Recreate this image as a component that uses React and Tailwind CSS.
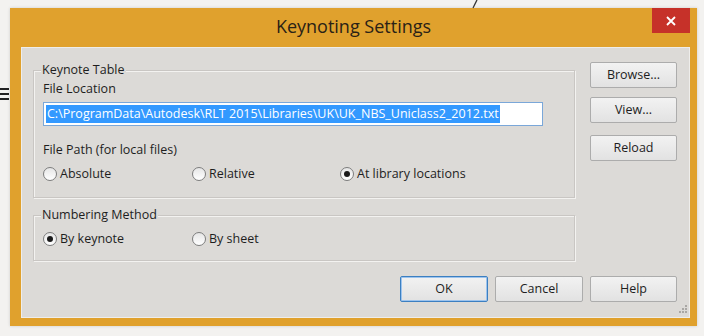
import React from "react";

const font = { fontFamily: '"Open Sans", "Noto Sans", sans-serif' };

const Radio = ({ label, checked }) => (
  <div className="flex items-center">
    <span className="w-[14px] h-[14px] rounded-full border border-[#7d7d7d] bg-gradient-to-b from-[#e6e6e6] to-white flex items-center justify-center">
      {checked && <span className="w-[6px] h-[6px] rounded-full bg-[#1a1a1a]" />}
    </span>
    <span className="ml-[3px] text-[12.5px] text-[#1e1e1e]">{label}</span>
  </div>
);

const Button = ({ label, def, className = "" }) => (
  <button
    className={`h-[26px] text-[12.5px] text-[#1e1e1e] rounded-[2px] border bg-gradient-to-b from-[#f2f2f2] to-[#e2e2e2] ${
      def ? "border-[#3c7fc1] shadow-[inset_0_0_0_1px_#9dc4ee]" : "border-[#acacac]"
    } ${className}`}
  >
    {label}
  </button>
);

const GroupBox = ({ title, className = "", children }) => (
  <div className={`relative border border-[#c9c6c3] shadow-[inset_1px_1px_0_#f3f2f0,1px_1px_0_#f3f2f0] ${className}`}>
    <span className="absolute -top-[9px] left-[7px] px-[1px] bg-[#dcdad7] text-[12.5px] leading-[16px] text-[#1e1e1e]">
      {title}
    </span>
    {children}
  </div>
);

export default function App() {
  return (
    <div className="relative w-[704px] h-[336px] bg-[#f3f2f0] overflow-hidden" style={font}>
      {/* stray marks from the window behind */}
      <svg className="absolute left-[468px] top-0" width="12" height="10">
        <path d="M9 0 L5 8" stroke="#333" strokeWidth="1.3" fill="none" />
      </svg>
      <div className="absolute left-0 top-[88px] w-[9px] flex flex-col gap-[3px]">
        <span className="h-[2px] bg-[#222]" />
        <span className="h-[2px] bg-[#222]" />
        <span className="h-[2px] bg-[#222]" />
      </div>

      <div className="ml-[10px] mt-[8px] w-[687px] h-[318px] bg-[#e0a12d] flex flex-col shadow-[0_0_3px_rgba(0,0,0,0.15)]">
        {/* title bar */}
        <div className="relative h-[39px] flex items-center justify-center">
          <span className="text-[18px] text-[#2a2216] -mt-[2px]">Keynoting Settings</span>
          <div className="absolute right-[7px] top-0 w-[38px] h-[25px] bg-[#c63129] flex items-center justify-center">
            <svg width="10" height="10" viewBox="0 0 10 10">
              <path d="M1 1 L9 9 M9 1 L1 9" stroke="#fff" strokeWidth="1.8" />
            </svg>
          </div>
        </div>

        {/* content */}
        <div className="relative ml-[11px] mr-[7px] mb-[8px] flex-1 bg-[#dcdad7] border border-[#eeedeb] pl-[11px] pt-[14px] text-[#1e1e1e]">
          <div className="flex items-start">
            <div className="w-[542px] pt-[8px]">
              <GroupBox title="Keynote Table" className="h-[128px] pl-[9px] pt-[10px]">
                <div className="text-[12.5px] leading-[16px]">File Location</div>
                <div className="mt-[5px] w-[500px] h-[24px] bg-white border border-[#7aa7d9] flex items-center pl-[2px]">
                  <span className="bg-[#3399ff] text-white text-[12.5px] leading-[18px] px-[1px] whitespace-nowrap">
                    C:\ProgramData\Autodesk\RLT 2015\Libraries\UK\UK_NBS_Uniclass2_2012.txt
                  </span>
                </div>
                <div className="mt-[16px] text-[12.5px] leading-[16px]">File Path (for local files)</div>
                <div className="mt-[7px] grid grid-cols-[149px_148px_1fr]">
                  <Radio label="Absolute" />
                  <Radio label="Relative" />
                  <Radio label="At library locations" checked />
                </div>
              </GroupBox>

              <GroupBox title="Numbering Method" className="mt-[17px] h-[46px] pl-[9px] pt-[14px]">
                <div className="grid grid-cols-[149px_148px_1fr]">
                  <Radio label="By keynote" checked />
                  <Radio label="By sheet" />
                </div>
              </GroupBox>
            </div>

            <div className="ml-[15px] w-[87px] flex flex-col">
              <Button label="Browse..." />
              <Button label="View..." className="mt-[9px]" />
              <Button label="Reload" className="mt-[12px]" />
            </div>
          </div>

          <div className="mt-[15px] mr-[12px] flex justify-end gap-[7px]">
            <Button label="OK" def className="w-[88px]" />
            <Button label="Cancel" className="w-[88px]" />
            <Button label="Help" className="w-[87px]" />
          </div>

          {/* resize grip */}
          <svg className="absolute right-[2px] bottom-[2px]" width="10" height="10">
            {[[8, 0], [5, 3], [8, 3], [2, 6], [5, 6], [8, 6]].map(([x, y], i) => (
              <rect key={i} x={x} y={y} width="2" height="2" fill="#a9a7a4" />
            ))}
          </svg>
        </div>
      </div>
    </div>
  );
}
